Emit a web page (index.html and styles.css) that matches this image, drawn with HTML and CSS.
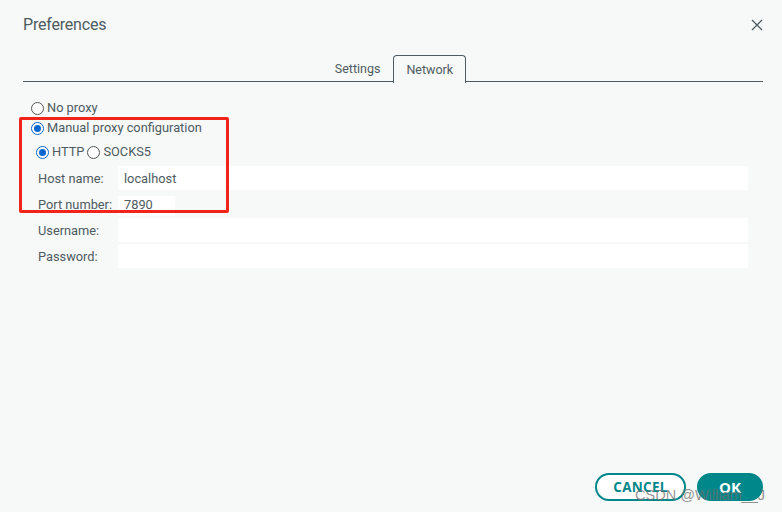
FILE: index.html
```html
<!DOCTYPE html>
<html lang="en">
<head>
<meta charset="UTF-8">
<title>Preferences</title>
<link rel="stylesheet" href="styles.css">
</head>
<body>
<div class="dialog">
	<div class="header">
		<div class="title">Preferences</div>
		<div class="close">
			<svg width="12" height="12" viewBox="0 0 12 12"><path d="M1 1L11 11M11 1L1 11" stroke="#4e5b61" stroke-width="1.3"/></svg>
		</div>
	</div>

	<div class="tabs">
		<div class="tab">Settings</div>
		<div class="tab active">Network</div>
	</div>

	<div class="content">
		<label class="radio"><span class="dot"></span>No proxy</label>
		<div class="manual">
			<label class="radio"><span class="dot on"></span>Manual proxy configuration</label>
			<div class="protocols">
				<label class="radio"><span class="dot on"></span>HTTP</label>
				<label class="radio"><span class="dot"></span>SOCKS5</label>
			</div>
			<div class="row"><span class="label">Host name:</span><span class="input">localhost</span></div>
			<div class="row"><span class="label">Port number:</span><span class="input short">7890</span></div>
			<div class="redbox"></div>
		</div>
		<div class="row"><span class="label">Username:</span><span class="input"></span></div>
		<div class="row"><span class="label">Password:</span><span class="input"></span></div>
	</div>

	<div class="footer">
		<button class="btn cancel">CANCEL</button>
		<button class="btn ok">OK</button>
		<div class="watermark">CSDN @William__J</div>
	</div>
</div>
</body>
</html>
```

FILE: styles.css
```css
body {
	margin: 0;
	background: #f7f8f8;
	font-family: Roboto, "Liberation Sans", Arial, sans-serif;
	color: #4e5b61;
}
.dialog {
	width: 782px;
	height: 512px;
	display: flex;
	flex-direction: column;
	box-sizing: border-box;
	padding: 0 19px 0 23px;
}
.header {
	display: flex;
	justify-content: space-between;
	align-items: center;
	height: 48px;
}
.title {
	font-size: 16px;
	letter-spacing: -0.2px;
}
.close {
	display: flex;
	padding-top: 2px;
}
.tabs {
	display: flex;
	justify-content: center;
	align-items: flex-end;
	height: 34px;
	border-bottom: 1.5px solid #4e5b61;
	padding-left: 2px;
	box-sizing: border-box;
}
.tab {
	font-size: 12.5px;
	height: 26px;
	line-height: 28px;
	padding: 0 13px;
	box-sizing: border-box;
}
.tab.active {
	border: 1.5px solid #4e5b61;
	border-bottom: none;
	border-radius: 4px 4px 0 0;
	background: #f7f8f8;
	margin-bottom: -1.5px;
	height: 28px;
	padding: 0 12px;
	line-height: 27px;
}
.content {
	padding: 16px 15px 0 8px;
	font-size: 12.8px;
}
.radio {
	display: flex;
	align-items: center;
	height: 20px;
	line-height: 20px;
}
.dot {
	width: 11px;
	height: 11px;
	border: 1px solid #555;
	border-radius: 50%;
	margin-right: 3px;
	background: #fff;
	position: relative;
}
.dot.on {
	border-color: #0b67d0;
}
.dot.on::after {
	content: "";
	position: absolute;
	left: 2px;
	top: 2px;
	width: 7px;
	height: 7px;
	border-radius: 50%;
	background: #0b67d0;
}
.manual {
	position: relative;
}
.protocols {
	display: flex;
	padding-left: 5px;
	margin-top: 3px;
	height: 22px;
	align-items: center;
}
.protocols .radio {
	margin-right: 3px;
}
.row {
	display: flex;
	align-items: center;
	height: 24px;
	margin-top: 2px;
	padding-left: 7px;
}
.manual .protocols + .row {
	margin-top: 3px;
}
.label {
	width: 80px;
	flex-shrink: 0;
}
.input {
	flex: 1;
	height: 100%;
	background: #fff;
	display: flex;
	align-items: center;
	padding-left: 6px;
}
.input.short {
	flex: none;
	width: 51px;
	height: 20px;
	align-self: flex-end;
	padding-bottom: 3px;
	box-sizing: border-box;
	width: 57px;
}
.redbox {
	position: absolute;
	left: -12px;
	top: -1px;
	width: 204px;
	height: 90px;
	border: 3px solid #f2231b;
	border-radius: 2px;
	pointer-events: none;
}
.footer {
	margin-top: auto;
	display: flex;
	justify-content: flex-end;
	gap: 11px;
	padding-bottom: 11px;
	position: relative;
}
.btn {
	height: 28px;
	border-radius: 14px;
	font-family: "Open Sans", "Liberation Sans", sans-serif;
	font-weight: bold;
	border: 2px solid #00878a;
	cursor: pointer;
}
.cancel {
	width: 91px;
	background: #fff;
	color: #00878a;
	font-size: 13.5px;
	letter-spacing: 0.3px;
}
.ok {
	width: 66px;
	background: #00878a;
	color: #fff;
	font-size: 15px;
}
.watermark {
	position: absolute;
	right: -2px;
	bottom: 9px;
	font-size: 14.5px;
	color: rgba(110, 110, 110, 0.75);
	font-family: "Liberation Sans", Arial, sans-serif;
	pointer-events: none;
}
```
